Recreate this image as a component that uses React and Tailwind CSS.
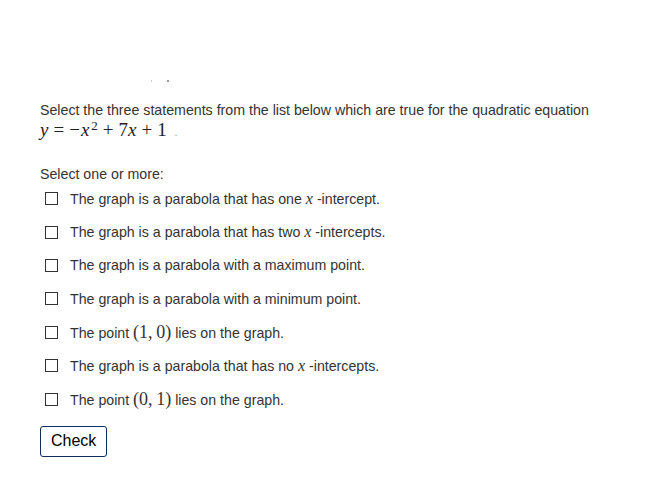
import React from "react";

const serif = { fontFamily: "'Liberation Serif', 'DejaVu Serif', serif" };

const X = () => (
  <span className="italic text-[16px]" style={serif}>
    x
  </span>
);

const M = ({ children }) => (
  <span className="text-[18px]" style={serif}>
    {children}
  </span>
);

const Op = ({ children }) => <span className="inline-block mx-[5px]">{children}</span>;

const options = [
  <>The graph is a parabola that has one <X /> -intercept.</>,
  <>The graph is a parabola that has two <X /> -intercepts.</>,
  <>The graph is a parabola with a maximum point.</>,
  <>The graph is a parabola with a minimum point.</>,
  <>The point <M>(1,&thinsp;0)</M> lies on the graph.</>,
  <>The graph is a parabola that has no <X /> -intercepts.</>,
  <>The point <M>(0,&thinsp;1)</M> lies on the graph.</>,
];

export default function App() {
  return (
    <div className="w-[645px] h-[487px] bg-white text-[#333] text-[14.2px] font-['Liberation_Sans',Arial,sans-serif]">
      <div className="flex gap-[15px] pt-[80px] pl-[151px] h-[100px]">
        <span className="w-px h-[2px] bg-[#ccc]" />
        <span className="w-[2px] h-[2px] bg-[#999]" />
      </div>
      <div className="px-10">
        <p className="leading-5">
          Select the three statements from the list below which are true for the quadratic equation
        </p>
        <p className="leading-5 text-[19px] text-[#222]" style={serif}>
          <i>y</i>
          <Op>=</Op>−<i className="ml-px">x</i>
          <sup className="text-[13px] ml-[2px]">2</sup>
          <Op>+</Op>7<i>x</i>
          <Op>+</Op>1<span className="ml-[8px] text-[#999] text-[10px]">.</span>
        </p>
        <p className="mt-[21px] leading-5">Select one or more:</p>
        <div className="mt-[-2px] flex flex-col">
          {options.map((o, i) => (
            <label key={i} className="flex items-center h-[33.4px] pl-[5px]">
              <span className="w-[13px] h-[13px] border border-[#333] bg-white shrink-0" />
              <span className="ml-[12px] leading-5">{o}</span>
            </label>
          ))}
        </div>
        <button className="mt-[10px] px-[10px] h-[31px] border border-[#0f2d5c] rounded-[3px] text-black text-[16px]">
          Check
        </button>
      </div>
    </div>
  );
}
